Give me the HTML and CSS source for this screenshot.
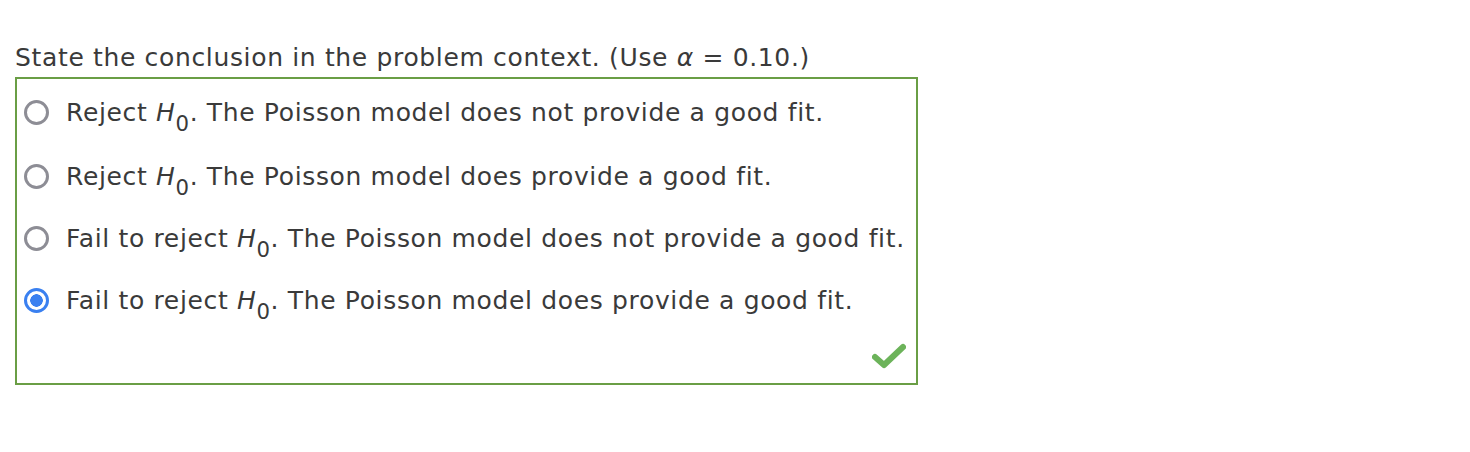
FILE: index.html
```html
<!DOCTYPE html>
<html>
<head>
<meta charset="utf-8">
<link rel="stylesheet" href="styles.css">
</head>
<body>
<div class="page">
  <p class="prompt">State the conclusion in the problem context. (Use <i class="var">α</i> = 0.10.)</p>
  <div class="answer-box">
    <label class="option"><span class="radio"></span><span class="text">Reject <i class="var">H</i><sub>0</sub>. The Poisson model does not provide a good fit.</span></label>
    <label class="option"><span class="radio"></span><span class="text">Reject <i class="var">H</i><sub>0</sub>. The Poisson model does provide a good fit.</span></label>
    <label class="option"><span class="radio"></span><span class="text">Fail to reject <i class="var">H</i><sub>0</sub>. The Poisson model does not provide a good fit.</span></label>
    <label class="option"><span class="radio checked"></span><span class="text">Fail to reject <i class="var">H</i><sub>0</sub>. The Poisson model does provide a good fit.</span></label>
    <div class="status">
      <svg class="check" width="34" height="26" viewBox="0 0 34 26"><path d="M3 14 L12 22 L31 4" fill="none" stroke="#6cb35a" stroke-width="6" stroke-linecap="round" stroke-linejoin="round"/></svg>
    </div>
  </div>
</div>
</body>
</html>
```
FILE: styles.css
```css
body {
  margin: 0;
  background: #fff;
  font-family: "DejaVu Sans", Verdana, sans-serif;
  color: #3a3a3a;
}
.page {
  padding: 42px 0 0 15px;
}
.prompt {
  margin: 0;
  font-size: 25px;
  letter-spacing: 0.65px;
  line-height: 32px;
}
.var {
  font-style: italic;
}
.answer-box {
  margin-top: 3px;
  width: 899px;
  height: 304px;
  border: 2px solid #6a9e45;
  box-sizing: content-box;
  position: relative;
}
.option {
  display: flex;
  align-items: center;
  height: 62px;
  padding-left: 7px;
  font-size: 25px;
  letter-spacing: 0.65px;
}
.option:first-child {
  height: 66px;
}
.radio {
  width: 19px;
  height: 19px;
  border: 3px solid #8d8d95;
  border-radius: 50%;
  margin-right: 17px;
  flex: none;
  box-sizing: content-box;
}
.radio.checked {
  border-color: #3a80f0;
  background: radial-gradient(circle, #3a80f0 0 6px, #fff 6.5px);
}
sub {
  font-size: 0.85em;
  vertical-align: -0.45em;
  line-height: 0;
}
.status {
  position: absolute;
  right: 10px;
  bottom: 14px;
}
.check {
  display: block;
}
```
